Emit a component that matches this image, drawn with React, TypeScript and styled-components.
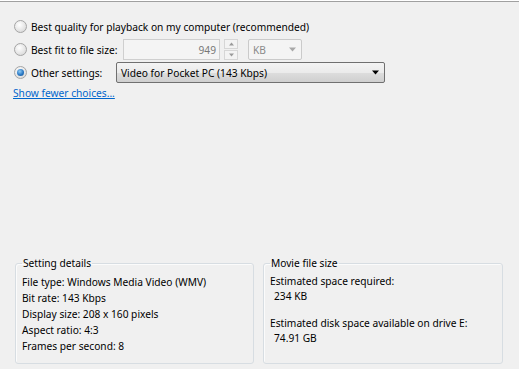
import React from "react";
import styled, { createGlobalStyle } from "styled-components";

const GlobalStyle = createGlobalStyle`
  html, body {
    margin: 0;
    padding: 0;
    background: #f0f0f0;
  }
  body {
    font-family: "Noto Sans", "Open Sans", sans-serif;
    font-size: 10.2px;
    color: #000;
  }
`;

const Page = styled.div`
  height: 369px;
  display: flex;
  flex-direction: column;
  box-sizing: border-box;
  border-top: 1px solid #ffffff;
  overflow: hidden;
`;

const Rule = styled.div`
  height: 1px;
  background: #a0a0a0;
`;

const Options = styled.div`
  padding: 13px 0 0 14px;
  display: flex;
  flex-direction: column;
`;

const Row = styled.div`
  height: 23px;
  display: flex;
  align-items: center;
`;

const Radio = styled.span<{ $checked?: boolean }>`
  width: 11px;
  height: 11px;
  border-radius: 50%;
  border: 1px solid #a5a5a5;
  background: radial-gradient(circle at 40% 35%, #ffffff 0%, #e4e4e4 60%, #cfcfcf 100%);
  position: relative;
  flex: none;
  margin-right: 4px;

  &::after {
    content: "";
    display: ${(p) => (p.$checked ? "block" : "none")};
    position: absolute;
    left: 2px;
    top: 2px;
    width: 7px;
    height: 7px;
    border-radius: 50%;
    background: radial-gradient(circle at 40% 35%, #8ecbf5 0%, #2a78c4 55%, #134f8d 100%);
  }
`;

const Label = styled.span<{ $width?: number }>`
  width: ${(p) => (p.$width ? `${p.$width}px` : "auto")};
  white-space: nowrap;
`;

const NumberBox = styled.div`
  width: 97px;
  height: 21px;
  box-sizing: border-box;
  border: 1px solid #cfcfcf;
  background: #f4f4f4;
  color: #777;
  display: flex;
  align-items: center;
  justify-content: flex-end;
  padding-right: 3px;
`;

const Spinner = styled.div`
  display: flex;
  flex-direction: column;
  gap: 1px;
  margin-left: 4px;
  height: 21px;
`;

const SpinButton = styled.div`
  width: 14px;
  height: 10px;
  box-sizing: border-box;
  border: 1px solid #d6d6d6;
  background: #f3f3f3;
  display: flex;
  align-items: center;
  justify-content: center;
`;

const Select = styled.div<{ $disabled?: boolean; $width: number }>`
  width: ${(p) => p.$width}px;
  height: 21px;
  box-sizing: border-box;
  border: 1px solid ${(p) => (p.$disabled ? "#cacaca" : "#707070")};
  border-radius: 2px;
  background: ${(p) =>
    p.$disabled ? "#f4f4f4" : "linear-gradient(#f4f4f4 0%, #ebebeb 50%, #dddddd 51%, #cfcfcf 100%)"};
  color: ${(p) => (p.$disabled ? "#8a8a8a" : "#000")};
  display: flex;
  align-items: center;
  justify-content: space-between;
  padding: 0 5px 0 4px;
  margin-left: ${(p) => (p.$disabled ? 10 : 0)}px;
`;

const Link = styled.a`
  color: #0066cc;
  text-decoration: underline;
  margin-top: 1px;
  line-height: 17px;
  width: fit-content;
  margin-left: -1px;
`;

const Groups = styled.div`
  margin-top: auto;
  display: flex;
  gap: 9px;
  padding: 0 0 5px 15px;
`;

const Group = styled.fieldset<{ $width: number }>`
  width: ${(p) => p.$width}px;
  height: 108px;
  box-sizing: border-box;
  margin: 0;
  padding: 4px 6px 0;
  border: 1px solid #d7dde2;
  border-radius: 3px;
  box-shadow: inset 1px 1px 0 #fbfbfb;
`;

const Legend = styled.legend`
  padding: 0 1px;
  margin-left: 0;
  line-height: 14px;
`;

const Line = styled.div<{ $indent?: boolean; $gap?: number; $tight?: boolean }>`
  line-height: ${(p) => (p.$tight ? 15 : 16)}px;
  padding-left: ${(p) => (p.$indent ? 4 : 0)}px;
  margin-top: ${(p) => p.$gap ?? 0}px;
  white-space: nowrap;
`;

const Arrow = ({ color, size = 7, up }: { color: string; size?: number; up?: boolean }) => (
  <svg width={size} height={Math.ceil(size / 2) + 1} viewBox="0 0 7 4">
    <path d={up ? "M0 4 L3.5 0 L7 4 Z" : "M0 0 L7 0 L3.5 4 Z"} fill={color} />
  </svg>
);

export default function App() {
  return (
    <Page>
      <GlobalStyle />
      <Rule />
      <Options>
        <Row>
          <Radio />
          <Label>Best quality for playback on my computer (recommended)</Label>
        </Row>
        <Row>
          <Radio />
          <Label $width={92}>Best fit to file size:</Label>
          <NumberBox>949</NumberBox>
          <Spinner>
            <SpinButton>
              <Arrow color="#9a9a9a" size={5} up />
            </SpinButton>
            <SpinButton>
              <Arrow color="#9a9a9a" size={5} />
            </SpinButton>
          </Spinner>
          <Select $disabled $width={54}>
            <span>KB</span>
            <Arrow color="#a8a8a8" />
          </Select>
        </Row>
        <Row>
          <Radio $checked />
          <Label $width={85}>Other settings:</Label>
          <Select $width={269}>
            <span>Video for Pocket PC (143 Kbps)</span>
            <Arrow color="#000" />
          </Select>
        </Row>
        <Link href="#">Show fewer choices...</Link>
      </Options>
      <Groups>
        <Group $width={239}>
          <Legend>Setting details</Legend>
          <Line>File type: Windows Media Video (WMV)</Line>
          <Line>Bit rate: 143 Kbps</Line>
          <Line>Display size: 208 x 160 pixels</Line>
          <Line>Aspect ratio: 4:3</Line>
          <Line>Frames per second: 8</Line>
        </Group>
        <Group $width={240}>
          <Legend>Movie file size</Legend>
          <Line $tight>Estimated space required:</Line>
          <Line $tight $indent>234 KB</Line>
          <Line $tight $gap={12}>Estimated disk space available on drive E:</Line>
          <Line $tight $indent>74.91 GB</Line>
        </Group>
      </Groups>
    </Page>
  );
}
